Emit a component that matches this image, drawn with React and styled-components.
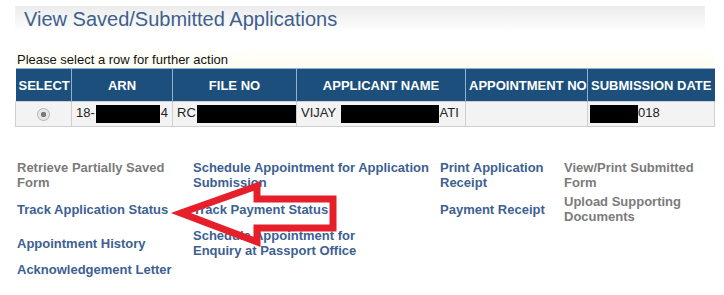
import React from 'react'
import styled, { createGlobalStyle } from 'styled-components'

const GlobalStyle = createGlobalStyle`
  body {
    margin: 0;
    background: #fff;
    font-family: "Liberation Sans", Arial, sans-serif;
  }
`;

const columns = [
  { title: 'SELECT', width: 56 },
  { title: 'ARN', width: 101 },
  { title: 'FILE NO', width: 124 },
  { title: 'APPLICANT NAME', width: 169 },
  { title: 'APPOINTMENT NO', width: 122 },
  { title: 'SUBMISSION DATE', width: 127 },
];

// each link is a list of its lines, as they break on the page
const links = [
  [
    { lines: ['Retrieve Partially Saved', 'Form'], muted: true },
    { lines: ['Schedule Appointment for Application', 'Submission'] },
    { lines: ['Print Application', 'Receipt'] },
    { lines: ['View/Print Submitted', 'Form'], muted: true },
  ],
  [
    { lines: ['Track Application Status'] },
    { lines: ['Track Payment Status'] },
    { lines: ['Payment Receipt'] },
    { lines: ['Upload Supporting', 'Documents'], muted: true },
  ],
  [
    { lines: ['Appointment History'] },
    { lines: ['Schedule Appointment for', 'Enquiry at Passport Office'] },
    null,
    null,
  ],
  [{ lines: ['Acknowledgement Letter'] }, null, null, null],
];

export default function App() {
  return (
    <Page>
      <GlobalStyle />
      <TitleBar>
        <Title>View Saved/Submitted Applications</Title>
      </TitleBar>
      <NoticeBand>Please select a row for further action</NoticeBand>
      <Table>
        <colgroup>
          {columns.map((c) => (
            <col key={c.title} style={{ width: c.width }} />
          ))}
        </colgroup>
        <thead>
          <tr>
            {columns.map((c) => (
              <HeadCell key={c.title}>{c.title}</HeadCell>
            ))}
          </tr>
        </thead>
        <tbody>
          <tr>
            <Cell $center>
              <Radio />
            </Cell>
            <Cell>
              18-<Redact $w={64} />4
            </Cell>
            <Cell>
              RC<Redact $w={100} />
            </Cell>
            <Cell>
              VIJAY <Redact $w={98} />ATI
            </Cell>
            <Cell />
            <Cell>
              <Redact $w={48} $flush />018
            </Cell>
          </tr>
        </tbody>
      </Table>
      <LinkGrid>
        {links.flat().map((l, i) =>
          l ? (
            <ActionLink key={i} $muted={l.muted}>
              {l.lines.map((t) => (
                <LinkLine key={t}>{t}</LinkLine>
              ))}
            </ActionLink>
          ) : (
            <span key={i} />
          )
        )}
      </LinkGrid>
      <ArrowOverlay width="724" height="295" viewBox="0 0 724 295">
        <path
          d="M181 213 L257 186 L257 199 L333 199 L333 228 L257 228 L257 242 Z"
          fill="none"
          stroke="#e5202a"
          strokeWidth="7"
          strokeLinejoin="miter"
        />
      </ArrowOverlay>
    </Page>
  );
}

const Page = styled.div`
  position: relative;
  width: 724px;
  height: 295px;
  overflow: hidden;
  padding: 6px 0 0 15px;
  box-sizing: border-box;
`;

const TitleBar = styled.div`
  width: 690px;
  height: 26px;
  background: linear-gradient(to bottom, #ececec 0%, #f6f6f6 55%, #ffffff 100%);
  display: flex;
  align-items: center;
`;

const Title = styled.h1`
  margin: 0 0 0 9px;
  font-size: 20px;
  font-weight: normal;
  color: #3e5f8f;
`;

const NoticeBand = styled.div`
  margin-top: 13px;
  width: 699px;
  height: 23px;
  box-sizing: border-box;
  padding: 7px 0 0 2px;
  font-size: 13px;
  line-height: 15px;
  color: #111;
  background: linear-gradient(to bottom, #ffffff 0%, #fffdf0 100%);
`;

const Table = styled.table`
  width: 699px;
  border-collapse: collapse;
  table-layout: fixed;
`;

const HeadCell = styled.th`
  height: 33px;
  padding: 0 3px;
  box-sizing: border-box;
  background: #1c4f7c;
  color: #fff;
  font-size: 13px;
  font-weight: bold;
  text-align: center;
  white-space: nowrap;
  overflow: hidden;
  border-left: 1px solid #8fb2d4;
  border-top: 1px solid #8fb2d4;
  &:first-child {
    border-left: none;
  }
`;

const Cell = styled.td`
  height: 25px;
  padding: 0 4px;
  box-sizing: border-box;
  background: #f3f3f3;
  border: 1px solid #cfcfcf;
  font-size: 13px;
  color: #222;
  white-space: nowrap;
  overflow: hidden;
  text-align: ${(p) => (p.$center ? 'center' : 'left')};
`;

const Redact = styled.span`
  display: inline-block;
  width: ${(p) => p.$w}px;
  height: 18px;
  margin: 0 ${(p) => (p.$flush ? 0 : 1)}px 0 ${(p) => (p.$flush ? -2 : 1)}px;
  background: #000;
  vertical-align: middle;
`;

const Radio = styled.span`
  display: inline-block;
  width: 11px;
  height: 11px;
  border-radius: 50%;
  border: 1px solid #b5b5b5;
  background: radial-gradient(circle, #7a7a7a 0 2.5px, #e6e6e6 3px);
  vertical-align: middle;
  margin-top: -2px;
`;

const LinkGrid = styled.div`
  margin-top: 33px;
  padding-left: 2px;
  display: grid;
  grid-template-columns: 176px 247px 124px 150px;
  row-gap: 4px;
  align-items: center;
`;

const ActionLink = styled.a`
  font-size: 13px;
  font-weight: bold;
  line-height: 15px;
  color: ${(p) => (p.$muted ? '#7b7b7b' : '#3d5f92')};
  text-decoration: none;
`;

const LinkLine = styled.span`
  display: block;
  white-space: nowrap;
`;

const ArrowOverlay = styled.svg`
  position: absolute;
  left: 0;
  top: 0;
  pointer-events: none;
`;
